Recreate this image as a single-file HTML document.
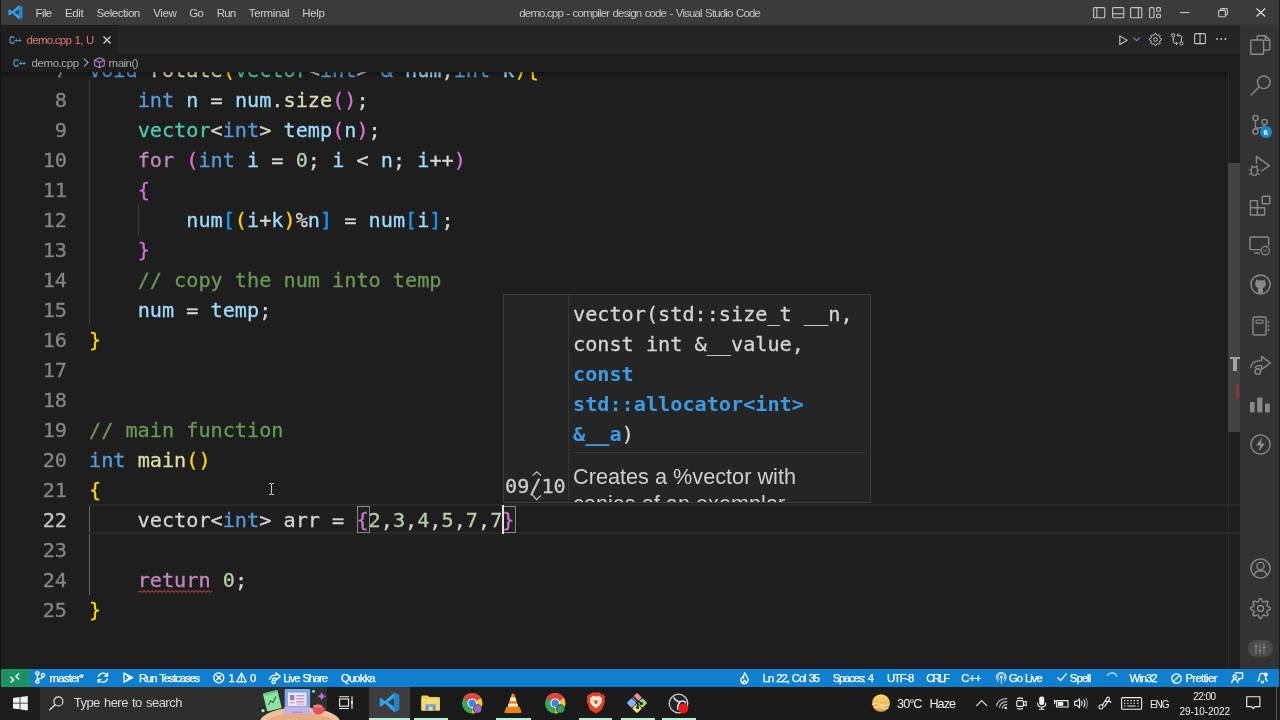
<!DOCTYPE html>
<html lang="en">
<head>
<meta charset="utf-8">
<title>demo.cpp - compiler design code - Visual Studio Code</title>
<style>
*{box-sizing:border-box;margin:0;padding:0}
html,body{width:1280px;height:720px;overflow:hidden;background:#1e1e1e;font-family:"Liberation Sans",sans-serif;}
#app{position:relative;width:1280px;height:720px;overflow:hidden;background:#1e1e1e;will-change:transform}
.abs{position:absolute}
.tx{position:absolute;white-space:pre;line-height:16px;height:16px}
#title{left:0;top:0;width:1280px;height:25px;background:#3b3b3b}
#tabs{left:0;top:25px;width:1240px;height:29px;background:#252526}
#tab1{left:0;top:0;width:118px;height:29px;background:#1e1e1e}
#crumbs{left:0;top:54px;width:1240px;height:18px;background:#1e1e1e}
#editor{left:0;top:72px;width:1240px;height:597px;background:#1e1e1e;overflow:hidden}
#edin{left:0;top:1px;width:1240px;height:596px}
.ln{position:absolute;left:0;width:67px;text-align:right;color:#858585;font-family:"DejaVu Sans Mono","Liberation Mono",monospace;font-size:20.2px;line-height:30px;height:30px;white-space:pre}
.ln.act{color:#c6c6c6}
.cl{position:absolute;left:89px;color:#d4d4d4;font-family:"DejaVu Sans Mono","Liberation Mono",monospace;font-size:20.2px;line-height:30px;height:30px;white-space:pre}
.cl,.ln,#pop .sig,#pop .ov{-webkit-text-stroke-width:0.3px}
#pop .sig b{-webkit-text-stroke-width:0}
.k{color:#569cd6}.t{color:#4ec9b0}.v{color:#9cdcfe}.f{color:#dcdcaa}.c{color:#c586c0}.n{color:#b5cea8}.cm{color:#6a9955}
.b1{color:#ffd700}.b2{color:#da70d6}.b3{color:#179fff}
#pop{left:503px;top:221px;width:368px;height:209px;background:#252526;border:1px solid #3e3e3e;overflow:hidden}
#pop .body{left:64px;top:0;width:302px;height:207px;border-left:1px solid #343434;overflow:hidden}
#pop .sig{position:absolute;left:4px;top:4px;width:292px;height:154px;border-bottom:1px solid #353535;font-family:"DejaVu Sans Mono","Liberation Mono",monospace;font-size:20.2px;line-height:30px;color:#d4d4d4;white-space:pre}
#pop .sig b{color:#3d9be4;font-weight:bold}
#pop .doc{position:absolute;left:4px;top:167.5px;font-size:21.7px;line-height:27.5px;color:#d0d0d0;white-space:pre}
#pop .ov{left:1px;top:176px;font-family:"DejaVu Sans Mono","Liberation Mono",monospace;font-size:20.2px;color:#cccccc;white-space:pre;line-height:30px}
#act{left:1240px;top:25px;width:40px;height:644px;background:#333333}
#status{left:0;top:669px;width:1280px;height:18px;background:#0e80cf}
#remote{left:0;top:669px;width:30px;height:18px;background:#1c9164}
#task{left:0;top:687px;width:1280px;height:33px;background:#1b1b1b}
#search{left:40px;top:687px;width:287px;height:33px;background:#2e2e2e}
svg{position:absolute;overflow:visible}
</style>
</head>
<body>
<div id="app">
  <div id="title" class="abs"></div>
  <div id="tabs" class="abs"><div id="tab1" class="abs"></div></div>
  <div id="crumbs" class="abs"></div>
  <div id="editor" class="abs">
  <div id="edin" class="abs">
    <div class="abs" style="left:89px;top:7px;width:1px;height:245px;background:#404040"></div>
    <div class="abs" style="left:138px;top:132px;width:1px;height:30px;background:#404040"></div>
    <div class="abs" style="left:89px;top:431px;width:1px;height:91px;background:#6a6a6a"></div>
    <div class="abs" style="left:89px;top:431px;width:1151px;height:30px;border-top:2px solid #292929;border-bottom:2px solid #292929"></div>
    <div class="abs" style="left:357px;top:433px;width:13px;height:27px;border:1px solid #888;background:rgba(0,100,0,0.1)"></div>
    <div class="abs" style="left:503px;top:433px;width:13px;height:27px;border:1px solid #888;background:rgba(0,100,0,0.1)"></div>
    <div class="abs" style="left:502px;top:432px;width:2px;height:29px;background:#e0e0e0"></div>
    <svg class="abs" style="left:138px;top:516px" width="74" height="5" viewBox="0 0 74 5"><path d="M0 3.5 L2 1.5 L4 3.5 L6 1.5 L8 3.5 L10 1.5 L12 3.5 L14 1.5 L16 3.5 L18 1.5 L20 3.5 L22 1.5 L24 3.5 L26 1.5 L28 3.5 L30 1.5 L32 3.5 L34 1.5 L36 3.5 L38 1.5 L40 3.5 L42 1.5 L44 3.5 L46 1.5 L48 3.5 L50 1.5 L52 3.5 L54 1.5 L56 3.5 L58 1.5 L60 3.5 L62 1.5 L64 3.5 L66 1.5 L68 3.5 L70 1.5 L72 3.5 L74 1.5" fill="none" stroke="#f14c4c" stroke-width="1"/></svg>
    <svg class="abs" style="left:267px;top:409px" width="9" height="14" viewBox="0 0 9 14"><path d="M2 1.5 H4 M5 1.5 H7 M4.5 1.5 V12.5 M2 12.5 H4 M5 12.5 H7" fill="none" stroke="#c8c8c8" stroke-width="1"/></svg>
    <div class="ln" style="top:-18px">7</div>
    <div class="cl" style="top:-18px"><span class="k">void</span> <span class="f">rotate</span><span class="b1">(</span><span class="t">vector</span>&lt;<span class="k">int</span>&gt; <span class="k">&amp;</span> <span class="v">num</span>,<span class="k">int</span> <span class="v">k</span><span class="b1">)</span><span class="b1">{</span></div>
    <div class="ln" style="top:12px">8</div>
    <div class="cl" style="top:12px">    <span class="k">int</span> <span class="v">n</span> = <span class="v">num</span>.<span class="f">size</span><span class="b2">()</span>;</div>
    <div class="ln" style="top:42px">9</div>
    <div class="cl" style="top:42px">    <span class="t">vector</span>&lt;<span class="k">int</span>&gt; <span class="v">temp</span><span class="b2">(</span><span class="v">n</span><span class="b2">)</span>;</div>
    <div class="ln" style="top:72px">10</div>
    <div class="cl" style="top:72px">    <span class="c">for</span> <span class="b2">(</span><span class="k">int</span> <span class="v">i</span> = <span class="n">0</span>; <span class="v">i</span> &lt; <span class="v">n</span>; <span class="v">i</span>++<span class="b2">)</span></div>
    <div class="ln" style="top:102px">11</div>
    <div class="cl" style="top:102px">    <span class="b2">{</span></div>
    <div class="ln" style="top:132px">12</div>
    <div class="cl" style="top:132px">        <span class="v">num</span><span class="b3">[</span><span class="b1">(</span><span class="v">i</span>+<span class="v">k</span><span class="b1">)</span>%<span class="v">n</span><span class="b3">]</span> = <span class="v">num</span><span class="b3">[</span><span class="v">i</span><span class="b3">]</span>;</div>
    <div class="ln" style="top:162px">13</div>
    <div class="cl" style="top:162px">    <span class="b2">}</span></div>
    <div class="ln" style="top:192px">14</div>
    <div class="cl" style="top:192px">    <span class="cm">// copy the num into temp</span></div>
    <div class="ln" style="top:222px">15</div>
    <div class="cl" style="top:222px">    <span class="v">num</span> = <span class="v">temp</span>;</div>
    <div class="ln" style="top:252px">16</div>
    <div class="cl" style="top:252px"><span class="b1">}</span></div>
    <div class="ln" style="top:282px">17</div>
    <div class="ln" style="top:312px">18</div>
    <div class="ln" style="top:342px">19</div>
    <div class="cl" style="top:342px"><span class="cm">// main function</span></div>
    <div class="ln" style="top:372px">20</div>
    <div class="cl" style="top:372px"><span class="k">int</span> <span class="f">main</span><span class="b1">()</span></div>
    <div class="ln" style="top:402px">21</div>
    <div class="cl" style="top:402px"><span class="b1">{</span></div>
    <div class="ln act" style="top:432px">22</div>
    <div class="cl" style="top:432px">    vector&lt;<span class="k">int</span>&gt; arr = <span class="b2 bm">{</span><span class="n">2</span>,<span class="n">3</span>,<span class="n">4</span>,<span class="n">5</span>,<span class="n">7</span>,<span class="n">7</span><span class="b2 bm">}</span></div>
    <div class="ln" style="top:462px">23</div>
    <div class="ln" style="top:492px">24</div>
    <div class="cl" style="top:492px">    <span class="c sq">return</span> <span class="n">0</span>;</div>
    <div class="ln" style="top:522px">25</div>
    <div class="cl" style="top:522px"><span class="b1">}</span></div>
    <div class="abs topshadow" style="left:0;top:-1px;width:1228px;height:5px;background:linear-gradient(rgba(0,0,0,0.4),rgba(0,0,0,0))"></div>
    <div id="pop" class="abs">
      <div class="abs" style="left:0;top:0;width:64px;height:207px;"></div>
      <div class="abs ov">09/10<svg class="abs" style="left:24px;top:-8px" width="16" height="40" viewBox="0 0 16 40"><path d="M3.6 12.6 L7.8 8.8 L12 12.6 M3.2 31.6 L7.6 36.6 L12 32.4" fill="none" stroke="#d0d0d0" stroke-width="1.1"/></svg></div>
      <div class="abs body">
        <div class="sig">vector(std::size_t __n,<br>const int &amp;__value,<br><b>const<br>std::allocator&lt;int&gt;<br>&amp;__a</b>)</div>
        <div class="doc">Creates a %vector with<br>copies of an exemplar</div>
      </div>
    </div>
  </div>
  </div>

  <div id="act" class="abs"></div>
  <div id="status" class="abs"></div>
  <div id="remote" class="abs"></div>
  <div id="task" class="abs"></div>
  <div id="search" class="abs"></div>
  <div class="abs" style="left:0;top:687px;width:40px;height:33px;background:#1d1d1d"></div>
  <svg style="left:12.6px;top:696px" width="14.8" height="14.4" viewBox="0 0 14.8 14.4" ><path d="M0 2 L6.6 1.1 V6.8 H0 Z M7.4 1 L14.8 0 V6.8 H7.4 Z M0 7.6 H6.6 V13.3 L0 12.4 Z M7.4 7.6 H14.8 V14.4 L7.4 13.4 Z" fill="#f2f2f2"/></svg>
  <svg style="left:49.4px;top:696.4px" width="15" height="14.4" viewBox="0 0 15 14.4" ><circle cx="9.4" cy="5.4" r="4.5" fill="none" stroke="#e0e0e0" stroke-width="1.2"/><path d="M6.2 8.8 L0.8 13.8" stroke="#e0e0e0" stroke-width="1.3" stroke-linecap="round"/></svg>
  <svg style="left:258px;top:687px" width="69" height="33" viewBox="258 687 69 33">
 <ellipse cx="300" cy="722" rx="40" ry="14.5" fill="#efc19d"/>
 <ellipse cx="300" cy="725" rx="36" ry="12" fill="#e6ad85"/>
 <circle cx="263" cy="710.7" r="1.6" fill="#a6ead2"/>
 <circle cx="313.5" cy="691.3" r="1.5" fill="#94e2a4"/>
 <g transform="rotate(-14 272 700)"><rect x="264.6" y="691.6" width="15" height="18.4" rx="1.2" fill="#8fe3a2"/><rect x="264.6" y="691.6" width="15" height="2.2" fill="#6cc487"/><path d="M267.4 704 L270.4 700.4 L272.4 702.6 L276.6 697.6" fill="none" stroke="#2f7d4a" stroke-width="1.3"/></g>
 <rect x="284.7" y="689" width="25.4" height="17.8" rx="1" fill="#79aee6"/>
 <rect x="288" y="692.6" width="18.4" height="13.4" fill="#eee6fa"/>
 <rect x="290" y="695" width="4.4" height="5.2" fill="#9a78c8"/>
 <rect x="290" y="702" width="4.4" height="1.4" fill="#b9a0dc"/>
 <rect x="296.4" y="695" width="8" height="1.5" fill="#b295d8"/>
 <rect x="296.4" y="698" width="8" height="1.5" fill="#b295d8"/>
 <rect x="296.4" y="701" width="8" height="1.5" fill="#e58a9a"/>
 <rect x="296.4" y="703.6" width="8" height="1.3" fill="#c9b4e6"/>
 <path d="M284.6 706.6 H310.2 L311.6 714 H283.2 Z" fill="#c3b2e4"/>
 <rect x="292" y="711.6" width="11" height="1.4" fill="#a794d0"/>
 <ellipse cx="318.4" cy="709.6" rx="5.6" ry="5" fill="#e2505c"/>
 <ellipse cx="317.6" cy="706.2" rx="4.6" ry="1.6" fill="#ee7c82"/>
 <path d="M323 707.4 Q326 708.6 323.4 711.6" fill="none" stroke="#c8404c" stroke-width="1.4"/>
 <path d="M321.7 692 L323 695 L326 696.2 L323 697.4 L321.7 700.4 L320.4 697.4 L317.4 696.2 L320.4 695 Z" fill="#c474da"/>
</svg>
  <svg style="left:339.4px;top:696.4px" width="14.6" height="13.2" viewBox="0 0 14.6 13.2" ><rect x="0.6" y="3" width="9" height="7.2" fill="none" stroke="#f0f0f0" stroke-width="1.1"/><path d="M0.2 0.7 H10 M0.2 12.5 H10 M13 0.2 V13" stroke="#f0f0f0" stroke-width="1.1"/><rect x="12" y="5.4" width="2" height="2.2" fill="#f0f0f0"/></svg>
  <div class="abs" style="left:369.4px;top:687px;width:40.2px;height:33px;background:#3e3c3c"></div>
  <div class="abs" style="left:369.4px;top:717.6px;width:40.2px;height:2.4px;background:#b6f0d4"></div>
  <div class="abs" style="left:414.2px;top:717.6px;width:33.8px;height:2.4px;background:#b6f0d4"></div>
  <div class="abs" style="left:496px;top:717.6px;width:34.8px;height:2.4px;background:#b6f0d4"></div>
  <div class="abs" style="left:579px;top:717.6px;width:33.4px;height:2.4px;background:#b6f0d4"></div>
  <div class="abs" style="left:620.6px;top:717.6px;width:34.2px;height:2.4px;background:#b6f0d4"></div>
  <div class="abs" style="left:662px;top:717.6px;width:34.0px;height:2.4px;background:#b6f0d4"></div>
  <svg style="left:379px;top:692.4px" width="21" height="20.6" viewBox="0 0 100 100" ><path d="M74 2 L98 13 V87 L74 98 L72 72 V28 Z" fill="#1f84c8"/><path d="M74 2 L28 45 L9 30 L2 34 V66 L9 70 L28 55 L74 98 V72 L42 50 L74 28 Z" fill="#2b9fe6"/><path d="M2 34 L9 30 L74 86 V98 L28 55 Z M2 66 L9 70 L74 14 V2 L28 45Z" fill="#3cb0f5" opacity="0.5"/></svg>
  <svg style="left:421px;top:694.6px" width="19.2" height="15.8" viewBox="0 0 19.2 15.8" ><path d="M0.4 1.2 Q0.4 0.4 1.2 0.4 H6.6 L8.4 2 H18 Q18.8 2 18.8 2.8 V15.4 H0.4 Z" fill="#f3c94e"/><rect x="0.4" y="3.6" width="18.4" height="11.8" fill="#f7da72"/><path d="M4.6 9.4 H14.6 V15.4 H4.6 Z" fill="#5b93d4"/><rect x="7.4" y="11.6" width="4.4" height="3.8" fill="#f7da72"/><rect x="4.6" y="9.4" width="10" height="1.4" fill="#7fb0e4"/></svg>
  <svg style="left:460.6px;top:692.0px" width="22.4" height="22.4" viewBox="-11.2 -11.2 22.4 22.4">
 <circle r="10.2" fill="#3aa757"/>
 <path d="M0 0 L-8.83 -5.10 A10.2 10.2 0 0 1 8.83 -5.10 Z" fill="#e4453a"/>
 <path d="M0 0 L8.83 -5.10 A10.2 10.2 0 0 1 0 10.2 Z" fill="#f8c634"/>
 <circle r="4.79" fill="#f4f4f4"/><circle r="3.67" fill="#4383ec"/>
 <circle cx="5.30" cy="5.71" r="4.28" fill="#9a63c9" stroke="#1b1b1b" stroke-width="0.6"/>
</svg>
  <svg style="left:504px;top:692.6px" width="18" height="20.4" viewBox="0 0 18 20.4" ><path d="M9 0.4 Q10 0.4 10.4 1.6 L14.6 14.4 H3.4 L7.6 1.6 Q8 0.4 9 0.4 Z" fill="#f08c18"/><path d="M6.7 4.6 H11.3 L12.4 8 H5.6 Z" fill="#f6f0e6"/><path d="M4.7 10.8 H13.3 L14.2 13.6 H3.8 Z" fill="#f6f0e6"/><path d="M2.4 14 H15.6 L17.6 19 Q17.6 20 16.6 20 H1.4 Q0.4 20 0.4 19 Z" fill="#ee8210"/></svg>
  <svg style="left:543.5px;top:692.0px" width="22.4" height="22.4" viewBox="-11.2 -11.2 22.4 22.4">
 <circle r="10.2" fill="#3aa757"/>
 <path d="M0 0 L-8.83 -5.10 A10.2 10.2 0 0 1 8.83 -5.10 Z" fill="#e4453a"/>
 <path d="M0 0 L8.83 -5.10 A10.2 10.2 0 0 1 0 10.2 Z" fill="#f8c634"/>
 <circle r="4.79" fill="#f4f4f4"/><circle r="3.67" fill="#4383ec"/>
 <circle cx="5.30" cy="5.71" r="4.28" fill="#2f9e57" stroke="#1b1b1b" stroke-width="0.6"/>
</svg>
  <svg style="left:586.2px;top:692.2px" width="19.8" height="21.6" viewBox="0 0 19.8 21.6" ><path d="M6 0.6 H13.8 L15.6 2.6 L17.6 2.4 L19.2 5 L18.4 7.2 L19 9.4 L16.4 16.6 Q15.8 18 14.6 18.8 L10.8 21 Q9.9 21.5 9 21 L5.2 18.8 Q4 18 3.4 16.6 L0.8 9.4 L1.4 7.2 L0.6 5 L2.2 2.4 L4.2 2.6 Z" fill="#e5401f"/><path d="M9.9 4.4 L13 3.8 L16 6.6 L15.4 8.6 L15.8 10 L13.6 13.4 L11.4 15 L9.9 16.6 L8.4 15 L6.2 13.4 L4 10 L4.4 8.6 L3.8 6.6 L6.8 3.8 Z" fill="#fbe9e2"/><path d="M9.9 8 L11.6 9 L11 11.4 L9.9 12.2 L8.8 11.4 L8.2 9 Z M6.2 7.4 L8 8 L7.2 8.8 Z M13.6 7.4 L11.8 8 L12.6 8.8 Z" fill="#e5401f"/></svg>
  <svg style="left:626px;top:692.2px" width="22" height="22" viewBox="-11 -11 22 22">
 <g transform="rotate(45)"><rect x="-7.3" y="-7.3" width="7" height="7" rx="1" fill="#f0909c"/><rect x="0.3" y="-7.3" width="7" height="7" rx="1" fill="#96d878"/><rect x="-7.3" y="0.3" width="7" height="7" rx="1" fill="#86b4f2"/><rect x="0.3" y="0.3" width="7" height="7" rx="1" fill="#f0e27a"/></g>
 <path d="M-3.6 -6.4 L0.6 -2 V4 M0.6 -2 L4 0.2" fill="none" stroke="#1a1a1a" stroke-width="1.4"/><circle cx="0.6" cy="4.4" r="1.5" fill="#1a1a1a"/><circle cx="4.4" cy="0.4" r="1.5" fill="#1a1a1a"/>
</svg>
  <svg style="left:668px;top:692.7px" width="21" height="21" viewBox="-10.5 -10.5 21 21">
 <circle r="9.3" fill="#22252a" stroke="#c9c9c9" stroke-width="1.3"/>
 <path d="M-4.4 -5.6 Q-2.6 -2 1.4 -1.6 M1.4 -1.6 Q5 -3.6 7 -1 M1.4 -1.6 Q-1.6 2 -0.4 6" fill="none" stroke="#e6e6e6" stroke-width="1.6" stroke-linecap="round"/>
 <circle cx="4.8" cy="5" r="5" fill="#f01414"/>
</svg>
  <svg style="left:871px;top:693px" width="20" height="20" viewBox="-10 -10 20 20">
 <defs><linearGradient id="sun" x1="0" y1="0" x2="0" y2="1"><stop offset="0" stop-color="#f7d77a"/><stop offset="1" stop-color="#e9a23a"/></linearGradient></defs>
 <circle r="8.8" fill="url(#sun)"/>
 <path d="M-9 1.6 Q-5 -0.6 -1 1.6 T8.6 1.6 M-7.4 4.8 Q-3.6 2.8 0.4 4.8 T7.6 4.4" fill="none" stroke="#f6e9c8" stroke-width="1.2" opacity="0.85"/>
</svg>
  <svg style="left:976px;top:700.2px" width="11.4" height="6.2" viewBox="0 0 11.4 6.2" ><path d="M0.6 5.6 L5.7 0.7 L10.8 5.6" fill="none" stroke="#f0f0f0" stroke-width="1.1" stroke-linecap="round" stroke-linejoin="round"/></svg>
  <svg style="left:996px;top:697.6px" width="11.6" height="11.6" viewBox="0 0 11.6 11.6" ><path d="M0.6 8 Q1.4 1 10.8 0.6 M3.6 9.4 Q4 4 10.8 3.6 M6.4 10.4 Q6.8 6.8 10.8 6.6" fill="none" stroke="#bdbdbd" stroke-width="1.1" stroke-linecap="round"/><circle cx="9.8" cy="10" r="1.3" fill="#f0f0f0"/></svg>
  <svg style="left:1016.4px;top:696.8px" width="11" height="13" viewBox="0 0 11 13" ><rect x="0.8" y="3.6" width="6.6" height="5.8" rx="1" fill="none" stroke="#f0f0f0" stroke-width="1.1" stroke-linecap="round" stroke-linejoin="round"/><path d="M7.4 5.6 L10.2 4.2 V8.8 L7.4 7.4 M1.6 1.6 Q4 0.2 6.6 1.6 M1.6 11.4 Q4 12.8 6.6 11.4" fill="none" stroke="#f0f0f0" stroke-width="1.1" stroke-linecap="round" stroke-linejoin="round"/></svg>
  <svg style="left:1036.8px;top:696.4px" width="9.4" height="13.8" viewBox="0 0 9.4 13.8" ><rect x="2.2" y="0.4" width="5" height="8.6" rx="2.2" fill="#f0f0f0"/><path d="M0.6 7 Q0.6 11 4.7 11 Q8.8 11 8.8 7 M4.7 11 V13.2 M2.4 13.3 H7" fill="none" stroke="#f0f0f0" stroke-width="1.1" stroke-linecap="round" stroke-linejoin="round"/></svg>
  <svg style="left:1053.6px;top:698.6px" width="14.6" height="9.6" viewBox="0 0 14.6 9.6" ><rect x="2.6" y="1.6" width="11.4" height="6.4" fill="none" stroke="#f0f0f0" stroke-width="1.1" stroke-linecap="round" stroke-linejoin="round"/><rect x="3.8" y="2.8" width="5.4" height="4" fill="#f0f0f0"/><path d="M0.6 1 V4.6 M0.6 2.4 H2.4" fill="none" stroke="#f0f0f0" stroke-width="1.1" stroke-linecap="round" stroke-linejoin="round"/></svg>
  <svg style="left:1074.4px;top:697px" width="13.8" height="12.6" viewBox="0 0 13.8 12.6" ><path d="M0.6 4.4 H2.8 L5.6 1.8 V10.8 L2.8 8.2 H0.6 Z" fill="none" stroke="#f0f0f0" stroke-width="1.1" stroke-linecap="round" stroke-linejoin="round"/><path d="M7.6 4.4 Q8.8 6.3 7.6 8.2 M9.8 2.8 Q12 6.3 9.8 9.8" fill="none" stroke="#f0f0f0" stroke-width="1.1" stroke-linecap="round" stroke-linejoin="round"/><path d="M12 1.2 Q15 6.3 12 11.4" fill="none" stroke="#9a9a9a" stroke-width="1" stroke-linecap="round"/></svg>
  <svg style="left:1097.6px;top:696.2px" width="14" height="14" viewBox="0 0 14 14" ><path d="M3.4 13 Q0.6 13 1 10.4 Q1.6 8.4 3.8 8.8 Q5.4 9.4 5 11.2 Q4.6 13 3.4 13 Z M4.6 9 L8.8 2 Q9.8 0.6 11 1.4 Q12 2.2 11.2 3.6 L6.6 10.4 M8 5.4 Q11.6 4.6 13 6.4" fill="none" stroke="#f0f0f0" stroke-width="1.1" stroke-linecap="round" stroke-linejoin="round"/></svg>
  <svg style="left:1120.8px;top:697.4px" width="21.2" height="12.8" viewBox="0 0 21.2 12.8" ><rect x="0.6" y="0.6" width="20" height="11.6" rx="1" fill="none" stroke="#f0f0f0" stroke-width="1.1" stroke-linecap="round" stroke-linejoin="round"/><path d="M3 3.6 H4.4 M6.2 3.6 H7.6 M9.4 3.6 H10.8 M12.6 3.6 H14 M15.8 3.6 H17.6 M3 6.2 H4.4 M6.2 6.2 H7.6 M9.4 6.2 H10.8 M12.6 6.2 H14 M15.8 6.2 H17.6 M3 9 H4.4 M6.4 9 H14.6 M16.4 9 H17.8" stroke="#f0f0f0" stroke-width="1.1" fill="none"/></svg>
  <svg style="left:1245.6px;top:696.2px" width="14.6" height="14" viewBox="0 0 14.6 14" ><path d="M0.7 0.7 H13.9 V10.6 H9 L7.3 12.6 L5.6 10.6 H0.7 Z" fill="none" stroke="#f0f0f0" stroke-width="1.1" stroke-linecap="round" stroke-linejoin="round"/></svg>
  <div class="abs" style="left:1276px;top:687px;width:1px;height:33px;background:#5a5a5a"></div>
  <svg style="left:7.6px;top:5.4px" width="15" height="14.6" viewBox="0 0 100 100" ><path d="M74 2 L98 13 V87 L74 98 L72 72 V28 Z" fill="#1f8ad2"/><path d="M74 2 L28 45 L9 30 L2 34 V66 L9 70 L28 55 L74 98 V72 L42 50 L74 28 Z" fill="#2ea3ee"/><path d="M2 34 L9 30 L74 86 V98 L28 55 Z M2 66 L9 70 L74 14 V2 L28 45Z" fill="#3cb0f5" opacity="0.55"/></svg>
  <span class="tx" style="left:8.6px;top:32px;font-size:10.6px;font-weight:bold;color:#4d9bc8"><span style="display:inline-block;transform:scaleX(0.78);transform-origin:0 50%;margin-right:-2px">C</span><span style="font-size:7px;vertical-align:0.9px;letter-spacing:-0.7px">++</span></span>
  <svg style="left:102.5px;top:36px" width="8" height="8" viewBox="0 0 8 8" ><path d="M0.5 0.5 L7.5 7.5 M7.5 0.5 L0.5 7.5" stroke="#d8d8d8" stroke-width="1.2" fill="none"/></svg>
  <span class="tx" style="left:13px;top:55px;font-size:10.6px;font-weight:bold;color:#4d9bc8"><span style="display:inline-block;transform:scaleX(0.78);transform-origin:0 50%;margin-right:-2px">C</span><span style="font-size:7px;vertical-align:0.9px;letter-spacing:-0.7px">++</span></span>
  <svg style="left:83px;top:58.4px" width="6" height="9" viewBox="0 0 6 9" ><path d="M1 0.5 L5 4.5 L1 8.5" stroke="#9a9a9a" stroke-width="1.1" fill="none"/></svg>
  <svg style="left:94px;top:56.7px" width="11" height="11.5" viewBox="0 0 11 11.5" ><path d="M5.5 0.7 L10.3 3 V8.4 L5.5 10.8 L0.7 8.4 V3 Z M0.7 3 L5.5 5.4 L10.3 3 M5.5 5.4 V10.8" stroke="#b180d7" stroke-width="1.1" fill="none" stroke-linejoin="round"/></svg>
  <svg style="left:1093px;top:7px" width="12.4" height="11.4" viewBox="0 0 12.4 11.4" ><rect x="0.6" y="0.6" width="11.2" height="10.2" rx="1" fill="none" stroke="#c5c5c5" stroke-width="1.1"/><path d="M3.8 0.6 V10.8" stroke="#c5c5c5" stroke-width="1.1"/></svg>
  <svg style="left:1111.5px;top:7px" width="12.4" height="11.4" viewBox="0 0 12.4 11.4" ><rect x="0.6" y="0.6" width="11.2" height="10.2" rx="1" fill="none" stroke="#c5c5c5" stroke-width="1.1"/><path d="M0.6 6.8 H11.8" stroke="#c5c5c5" stroke-width="1.1"/></svg>
  <svg style="left:1129.8px;top:7px" width="12.4" height="11.4" viewBox="0 0 12.4 11.4" ><rect x="0.6" y="0.6" width="11.2" height="10.2" rx="1" fill="none" stroke="#c5c5c5" stroke-width="1.1"/><path d="M8.4 0.6 V10.8" stroke="#c5c5c5" stroke-width="1.1"/></svg>
  <svg style="left:1148.6px;top:7px" width="12.4" height="11.4" viewBox="0 0 12.4 11.4" ><rect x="0.6" y="0.6" width="4.4" height="10.2" rx="1" fill="none" stroke="#c5c5c5" stroke-width="1.1"/><rect x="7.6" y="0.6" width="3.8" height="3.6" rx="0.8" fill="none" stroke="#c5c5c5" stroke-width="1.1"/><rect x="7.6" y="7.2" width="3.8" height="3.6" rx="0.8" fill="none" stroke="#c5c5c5" stroke-width="1.1"/></svg>
  <svg style="left:1180px;top:12.3px" width="9.4" height="1.2" viewBox="0 0 9.4 1.2" ><rect width="9.4" height="1.1" fill="#c5c5c5"/></svg>
  <svg style="left:1218px;top:8.4px" width="10" height="9.4" viewBox="0 0 10 9.4" ><rect x="0.6" y="2.4" width="6.8" height="6.4" rx="1" fill="none" stroke="#c5c5c5" stroke-width="1.1"/><path d="M2.6 2.2 V1.6 Q2.6 0.6 3.6 0.6 H8.4 Q9.4 0.6 9.4 1.6 V6 Q9.4 7 8.4 7 H7.6" fill="none" stroke="#c5c5c5" stroke-width="1.1"/></svg>
  <svg style="left:1256px;top:8.4px" width="9.6" height="9" viewBox="0 0 9.6 9" ><path d="M0.5 0.5 L9.1 8.5 M9.1 0.5 L0.5 8.5" stroke="#e0e0e0" stroke-width="1.2" fill="none"/></svg>
  <svg style="left:1119px;top:34.6px" width="9" height="10.4" viewBox="0 0 9 10.4" ><path d="M0.8 0.9 L8.2 5.2 L0.8 9.5 Z" fill="none" stroke="#c5c5c5" stroke-width="1.1" stroke-linejoin="round"/></svg>
  <svg style="left:1133px;top:37.4px" width="7.4" height="4.4" viewBox="0 0 7.4 4.4" ><path d="M0.5 0.5 L3.7 3.7 L6.9 0.5" fill="none" stroke="#7b83a8" stroke-width="1.1"/></svg>
  <svg style="left:1149.3px;top:32.5px" width="13" height="13" viewBox="0 0 13 13" ><path d="M12.47 5.91 L12.47 7.09 L10.90 7.84 L10.56 8.67 L11.14 10.31 L10.31 11.14 L8.67 10.56 L7.84 10.90 L7.09 12.47 L5.91 12.47 L5.16 10.90 L4.33 10.56 L2.69 11.14 L1.86 10.31 L2.44 8.67 L2.10 7.84 L0.53 7.09 L0.53 5.91 L2.10 5.16 L2.44 4.33 L1.86 2.69 L2.69 1.86 L4.33 2.44 L5.16 2.10 L5.91 0.53 L7.09 0.53 L7.84 2.10 L8.67 2.44 L10.31 1.86 L11.14 2.69 L10.56 4.33 L10.90 5.16 Z" fill="none" stroke="#c5c5c5" stroke-width="1" stroke-linejoin="round"/><circle cx="6.5" cy="6.5" r="1.9" fill="none" stroke="#c5c5c5" stroke-width="1"/></svg>
  <svg style="left:1171.2px;top:33px" width="12.6" height="12.6" viewBox="0 0 12.6 12.6" ><circle cx="2.2" cy="2.2" r="1.6" fill="none" stroke="#c5c5c5" stroke-width="1"/><circle cx="10.4" cy="10.4" r="1.6" fill="none" stroke="#c5c5c5" stroke-width="1"/><path d="M2.2 3.8 V8.4 Q2.2 10.4 4.2 10.4 H6.4 M5 8.8 L6.6 10.4 L5 12 M10.4 8.8 V4.2 Q10.4 2.2 8.4 2.2 H6.2 M7.6 0.6 L6 2.2 L7.6 3.8" fill="none" stroke="#c5c5c5" stroke-width="1"/></svg>
  <svg style="left:1193.6px;top:33.2px" width="12" height="11.2" viewBox="0 0 12 11.2" ><rect x="0.6" y="0.6" width="10.8" height="10" rx="1" fill="none" stroke="#c5c5c5" stroke-width="1.1"/><path d="M6 0.6 V10.6" stroke="#c5c5c5" stroke-width="1.1"/></svg>
  <svg style="left:1216px;top:38px" width="10.4" height="2" viewBox="0 0 10.4 2" ><circle cx="1" cy="1" r="0.95" fill="#c5c5c5"/><circle cx="5.2" cy="1" r="0.95" fill="#c5c5c5"/><circle cx="9.4" cy="1" r="0.95" fill="#c5c5c5"/></svg><svg style="left:1250px;top:35px" width="21" height="20" viewBox="0 0 21 20" ><path d="M7.2 4.6 V1.8 Q7.2 0.8 8.2 0.8 H15.4 L19.8 5.2 V14 Q19.8 15 18.8 15 H14.2 M15.2 0.9 V5.4 H19.7" fill="none" stroke="#8a8a8a" stroke-width="1.4" stroke-linejoin="round" stroke-linecap="round"/><path d="M1.8 5 H12.6 Q13.6 5 13.6 6 V18.2 Q13.6 19.2 12.6 19.2 H1.8 Q0.8 19.2 0.8 18.2 V6 Q0.8 5 1.8 5 Z" fill="none" stroke="#8a8a8a" stroke-width="1.4" stroke-linejoin="round" stroke-linecap="round"/></svg>
  <svg style="left:1250px;top:74px" width="22" height="22" viewBox="0 0 22 22" ><circle cx="13.8" cy="8.3" r="6.3" fill="none" stroke="#8a8a8a" stroke-width="1.4" stroke-linejoin="round" stroke-linecap="round"/><path d="M9.2 12.8 L1.2 21" fill="none" stroke="#8a8a8a" stroke-width="1.4" stroke-linejoin="round" stroke-linecap="round"/></svg>
  <svg style="left:1250px;top:113px" width="22" height="23" viewBox="0 0 22 23" ><circle cx="5.5" cy="5" r="2.6" fill="none" stroke="#8a8a8a" stroke-width="1.4" stroke-linejoin="round" stroke-linecap="round"/><circle cx="14.6" cy="9" r="2.6" fill="none" stroke="#8a8a8a" stroke-width="1.4" stroke-linejoin="round" stroke-linecap="round"/><circle cx="5.5" cy="18.5" r="2.6" fill="none" stroke="#8a8a8a" stroke-width="1.4" stroke-linejoin="round" stroke-linecap="round"/><path d="M5.5 7.6 V15.9 M14.6 11.6 Q14.2 14.6 10 14.8 Q6 15 5.6 15.9" fill="none" stroke="#8a8a8a" stroke-width="1.4" stroke-linejoin="round" stroke-linecap="round"/></svg>
  <div class="abs" style="left:1260px;top:126.4px;width:12px;height:12px;border-radius:6px;background:#1b86c9"></div>
  <span class="tx" style="left:1263.6px;top:124.6px;font-size:8px;font-weight:bold;color:#fff">6</span>
  <svg style="left:1248px;top:155px" width="23" height="22" viewBox="0 0 23 22" ><path d="M8.4 8 V1.4 L21.4 10.6 L13.6 16" fill="none" stroke="#8a8a8a" stroke-width="1.4" stroke-linejoin="round" stroke-linecap="round"/><path d="M3.4 14.6 Q3.4 11.8 6.4 11.8 Q9.4 11.8 9.4 14.6 V17 Q9.4 20.4 6.4 20.4 Q3.4 20.4 3.4 17 Z M4.6 12 L3.4 10.6 M8.2 12 L9.4 10.6 M3.4 15 H1 M3.4 18 L1.4 19.6 M9.4 15 H11.8 M9.4 18 L11.4 19.6" fill="none" stroke="#8a8a8a" stroke-width="1.2" stroke-linecap="round"/></svg>
  <svg style="left:1249px;top:194.6px" width="23" height="21.4" viewBox="0 0 23 21.4" ><path d="M1.4 5.6 H8.4 V12.8 H15.6 V20 H1.4 Z M1.4 12.8 H8.4 V20" fill="none" stroke="#8a8a8a" stroke-width="1.4" stroke-linejoin="round" stroke-linecap="round"/><rect x="13.2" y="1.2" width="7.6" height="7.6" rx="0.6" fill="none" stroke="#8a8a8a" stroke-width="1.4" stroke-linejoin="round" stroke-linecap="round"/></svg>
  <svg style="left:1249px;top:236px" width="23" height="20" viewBox="0 0 23 20" ><path d="M11 13.6 H2 Q1 13.6 1 12.6 V2 Q1 1 2 1 H18.6 Q19.6 1 19.6 2 V9.4 M5.6 17 H10.4" fill="none" stroke="#8a8a8a" stroke-width="1.4" stroke-linejoin="round" stroke-linecap="round"/><circle cx="16.2" cy="14.6" r="4.2" fill="none" stroke="#8a8a8a" stroke-width="1.2"/><path d="M14.6 13.4 L15.8 14.6 L14.6 15.8 M17.8 13.4 L16.6 14.6 L17.8 15.8" fill="none" stroke="#8a8a8a" stroke-width="0.9"/></svg>
  <svg style="left:1249.5px;top:273.9px" width="21" height="21" viewBox="0 0 21 21" ><circle cx="10.5" cy="10.5" r="9.6" fill="none" stroke="#8a8a8a" stroke-width="1.5"/><path d="M6.2 5.2 L8 6.6 Q10.5 6 13 6.6 L14.8 5.2 L15.2 7.8 Q16.2 9.2 15.8 11 Q15.2 13.6 12.6 14 Q13.2 15 13 17.6 L12.9 19.4 H8.1 L8 17.6 Q7.8 15 8.4 14 Q5.8 13.6 5.2 11 Q4.8 9.2 5.8 7.8 Z" fill="#8a8a8a"/></svg>
  <svg style="left:1252px;top:316px" width="18" height="20" viewBox="0 0 18 20" ><rect x="1" y="1" width="13" height="18" rx="1.2" fill="none" stroke="#8a8a8a" stroke-width="1.4" stroke-linejoin="round" stroke-linecap="round"/><rect x="4" y="4" width="7" height="3.2" rx="1" fill="none" stroke="#8a8a8a" stroke-width="1.2"/><path d="M16.4 5.5 V6.5 M16.4 9.5 V10.5 M16.4 13.5 V14.5" stroke="#8a8a8a" stroke-width="1.5" stroke-linecap="round"/></svg>
  <svg style="left:1249px;top:355px" width="23" height="21" viewBox="0 0 23 21" ><path d="M1.6 12.4 Q2.4 5.6 12.6 5.6 V1.4 L21.4 8 L12.6 14.4 V10.4 Q8.4 10.2 6 12.4" fill="none" stroke="#8a8a8a" stroke-width="1.4" stroke-linejoin="round" stroke-linecap="round"/><circle cx="8.8" cy="16.6" r="2.8" fill="none" stroke="#8a8a8a" stroke-width="1.4" stroke-linejoin="round" stroke-linecap="round"/></svg>
  <svg style="left:1249px;top:396px" width="23" height="18" viewBox="0 0 23 18" ><rect x="1" y="6" width="4.6" height="10.6" rx="0.8" fill="#8a8a8a"/><rect x="8.2" y="1.4" width="5.2" height="15.2" rx="0.8" fill="#8a8a8a"/><rect x="16" y="7.6" width="4.8" height="9" rx="0.8" fill="#8a8a8a"/></svg>
  <svg style="left:1249.5px;top:433.9px" width="21" height="21" viewBox="0 0 21 21" ><circle cx="10.5" cy="10.5" r="9.6" fill="none" stroke="#8a8a8a" stroke-width="1.4"/><path d="M12 3.6 L6 11.4 H10 L8.8 17.4 L15 9.4 H11 Z" fill="#8a8a8a"/></svg>
  <svg style="left:1249.5px;top:558.4px" width="21" height="21" viewBox="0 0 21 21" ><circle cx="10.5" cy="10.5" r="9.6" fill="none" stroke="#8a8a8a" stroke-width="1.4"/><circle cx="10.5" cy="8" r="3.6" fill="none" stroke="#8a8a8a" stroke-width="1.4"/><path d="M4 17.4 Q5 12.8 10.5 12.8 Q16 12.8 17 17.4" fill="none" stroke="#8a8a8a" stroke-width="1.4"/></svg>
  <svg style="left:1249.5px;top:597.7px" width="21" height="21" viewBox="0 0 21 21" ><path d="M20.25 9.54 L20.25 11.46 L17.39 12.59 L16.85 13.89 L18.08 16.72 L16.72 18.08 L13.89 16.85 L12.59 17.39 L11.46 20.25 L9.54 20.25 L8.41 17.39 L7.11 16.85 L4.28 18.08 L2.92 16.72 L4.15 13.89 L3.61 12.59 L0.75 11.46 L0.75 9.54 L3.61 8.41 L4.15 7.11 L2.92 4.28 L4.28 2.92 L7.11 4.15 L8.41 3.61 L9.54 0.75 L11.46 0.75 L12.59 3.61 L13.89 4.15 L16.72 2.92 L18.08 4.28 L16.85 7.11 L17.39 8.41 Z" fill="none" stroke="#8a8a8a" stroke-width="1.4" stroke-linejoin="round" stroke-linecap="round"/><circle cx="10.5" cy="10.5" r="3" fill="none" stroke="#8a8a8a" stroke-width="1.4" stroke-linejoin="round" stroke-linecap="round"/></svg>
  <div class="abs" style="left:1247.5px;top:640px;width:25px;height:16.6px;border-radius:8.3px;background:#4b4b4b"></div>
  <svg style="left:1254px;top:642.6px" width="12" height="11.4" viewBox="0 0 12 11.4" ><path d="M2 0.4 V11 M6 0.4 V11 M10 0.4 V11 M0.4 3.4 H3.6 M4.4 7.6 H7.6 M8.4 4.4 H11.6" stroke="#8c8c8c" stroke-width="1" fill="none"/></svg>
  <div class="abs" style="left:1228px;top:73px;width:1px;height:596px;background:#2c2c2c"></div>
  <div class="abs" style="left:1228px;top:163px;width:12px;height:269px;background:#424242"></div>
  <div class="abs" style="left:1229.5px;top:356.6px;width:10.5px;height:2.8px;background:#a4a4a4"></div>
  <div class="abs" style="left:1232.8px;top:359px;width:4.4px;height:12px;background:#a4a4a4"></div>
  <div class="abs" style="left:1236.4px;top:384px;width:3px;height:15px;background:#8c3434"></div>
  <div class="abs" style="left:0;top:0;width:1px;height:687px;background:#161616"></div>
  <div class="abs" style="left:1279px;top:0;width:1px;height:687px;background:#1a1a1a"></div><svg style="left:9.6px;top:672.6px" width="9.6" height="10" viewBox="0 0 9.6 10" ><path d="M0.8 5.2 L3.8 8 L0.8 10.2" transform="translate(0,-1)" fill="none" stroke="#ffffff" stroke-width="1.3" stroke-linecap="round" stroke-linejoin="round"/><path d="M8.8 0.8 L5.8 3.4 L8.8 6" fill="none" stroke="#ffffff" stroke-width="1.3" stroke-linecap="round" stroke-linejoin="round"/></svg>
  <svg style="left:35.4px;top:671px" width="10.4" height="12.8" viewBox="0 0 10.4 12.8" ><circle cx="2.4" cy="2.2" r="1.6" fill="none" stroke="#ffffff" stroke-width="1.3" stroke-linecap="round" stroke-linejoin="round"/><circle cx="8" cy="4" r="1.6" fill="none" stroke="#ffffff" stroke-width="1.3" stroke-linecap="round" stroke-linejoin="round"/><circle cx="2.4" cy="10.6" r="1.6" fill="none" stroke="#ffffff" stroke-width="1.3" stroke-linecap="round" stroke-linejoin="round"/><path d="M2.4 3.8 V9 M8 5.6 Q7.8 7.4 5 7.6 Q2.6 7.8 2.4 9" fill="none" stroke="#ffffff" stroke-width="1.3" stroke-linecap="round" stroke-linejoin="round"/></svg>
  <svg style="left:97px;top:672.2px" width="11.8" height="11.6" viewBox="0 0 11.8 11.6" ><path d="M1.4 4.6 Q3 1.2 6.2 1.2 Q9 1.2 10.4 3.8 M10.6 1.2 V4 H7.8 M10.4 7 Q8.8 10.4 5.6 10.4 Q2.8 10.4 1.4 7.8 M1.2 10.4 V7.6 H4" fill="none" stroke="#ffffff" stroke-width="1.3" stroke-linecap="round" stroke-linejoin="round"/></svg>
  <svg style="left:122.5px;top:672.4px" width="10.6" height="11.2" viewBox="0 0 10.6 11.2" ><path d="M1 1 L9.6 5.6 L1 10.2 Z M3.6 3.6 L6.8 5.6 L3.6 7.6" fill="none" stroke="#ffffff" stroke-width="1.3" stroke-linejoin="round"/></svg>
  <svg style="left:213.2px;top:672.2px" width="11.6" height="11.6" viewBox="0 0 11.6 11.6" ><circle cx="5.8" cy="5.8" r="5" fill="none" stroke="#ffffff" stroke-width="1.3" stroke-linecap="round" stroke-linejoin="round"/><path d="M3.8 3.8 L7.8 7.8 M7.8 3.8 L3.8 7.8" fill="none" stroke="#ffffff" stroke-width="1.3" stroke-linecap="round" stroke-linejoin="round"/></svg>
  <svg style="left:236.4px;top:672.4px" width="11" height="10.8" viewBox="0 0 11 10.8" ><path d="M5.5 1 L10.2 9.8 H0.8 Z M5.5 4.2 V7 M5.5 8.2 V8.4" fill="none" stroke="#ffffff" stroke-width="1.3" stroke-linecap="round" stroke-linejoin="round"/></svg>
  <svg style="left:269px;top:671.6px" width="12" height="12.4" viewBox="0 0 12 12.4" ><path d="M0.8 7.4 Q1.2 3.2 7 3.2 V0.8 L11.2 4.4 L7 8 V5.8 Q4.6 5.8 3.4 7" fill="none" stroke="#ffffff" stroke-width="1.3" stroke-linecap="round" stroke-linejoin="round"/><circle cx="4.6" cy="9.8" r="1.7" fill="none" stroke="#ffffff" stroke-width="1.3" stroke-linecap="round" stroke-linejoin="round"/></svg>
  <svg style="left:739.5px;top:671.6px" width="9" height="12.4" viewBox="0 0 9 12.4" ><path d="M4.6 0.8 Q5.4 3 7 4.8 Q8.6 7 7.8 9 Q6.8 11.6 4.4 11.6 Q1.6 11.6 1 9 Q0.6 6.6 2.6 4.6 Q2.6 6 3.6 6.4 Q3.2 3.4 4.6 0.8 Z M3.2 11.2 Q3 9.4 4.5 8.4 Q6 9.4 5.8 11.2" fill="none" stroke="#ffffff" stroke-width="1.3" stroke-linecap="round" stroke-linejoin="round"/></svg>
  <svg style="left:995.6px;top:672px" width="10.6" height="12" viewBox="0 0 10.6 12" ><circle cx="5.3" cy="5" r="1.2" fill="#ffffff"/><path d="M5.3 6.4 V11.4 M3 7.4 Q1.9 6.4 1.9 5 Q1.9 1.8 5.3 1.8 Q8.7 1.8 8.7 5 Q8.7 6.4 7.6 7.4 M2 9.2 Q0.5 7.6 0.5 5 Q0.5 0.5 5.3 0.5 Q10.1 0.5 10.1 5 Q10.1 7.6 8.6 9.2" fill="none" stroke="#ffffff" stroke-width="0.9" stroke-linecap="round"/></svg>
  <svg style="left:1056.6px;top:673.4px" width="10" height="8.6" viewBox="0 0 10 8.6" ><path d="M0.8 4.8 L3.6 7.6 L9.2 0.8" fill="none" stroke="#ffffff" stroke-width="1.3" stroke-linecap="round" stroke-linejoin="round"/></svg>
  <svg style="left:1105.5px;top:671.6px" width="12" height="12" viewBox="0 0 12 12" ><path d="M1.4 3.4 Q3 0.9 6 0.9 Q9.6 0.9 10.8 4.6" fill="none" stroke="#cfe6f7" stroke-width="1.1" stroke-linecap="round"/></svg>
  <svg style="left:1171.4px;top:672.6px" width="11" height="11" viewBox="0 0 11 11" ><circle cx="5.5" cy="5.5" r="4.7" fill="none" stroke="#ffffff" stroke-width="1.3" stroke-linecap="round" stroke-linejoin="round"/><path d="M2.4 8.6 L8.6 2.4" fill="none" stroke="#ffffff" stroke-width="1.3" stroke-linecap="round" stroke-linejoin="round"/></svg>
  <svg style="left:1231px;top:672.4px" width="12.4" height="11.4" viewBox="0 0 12.4 11.4" ><path d="M4.2 0.8 H11.6 V6.4 H9.6 L8 8 V6.4 H7.4" fill="none" stroke="#ffffff" stroke-width="1.3" stroke-linecap="round" stroke-linejoin="round"/><circle cx="3.8" cy="4.6" r="1.7" fill="none" stroke="#ffffff" stroke-width="1.3" stroke-linecap="round" stroke-linejoin="round"/><path d="M0.8 10.6 Q0.8 7.4 3.8 7.4 Q6.8 7.4 6.8 10.6" fill="none" stroke="#ffffff" stroke-width="1.3" stroke-linecap="round" stroke-linejoin="round"/></svg>
  <svg style="left:1257px;top:672px" width="11.4" height="12" viewBox="0 0 11.4 12" ><path d="M1 9 Q2.4 8 2.4 5 Q2.4 1.4 5.4 1.4 Q6.2 1.4 6.8 1.7 M8.6 5.4 Q8.6 8 10 9 Z M4.4 9.2 Q4.4 10.8 5.5 10.8 Q6.6 10.8 6.6 9.2" fill="none" stroke="#ffffff" stroke-width="1.3" stroke-linecap="round" stroke-linejoin="round"/><circle cx="8.8" cy="2.6" r="2.1" fill="#ffffff"/></svg>
  <span class="tx" style="left:35.6px;top:4.6px;font-size:11.5px;letter-spacing:-0.633px;word-spacing:0px;color:#cccccc;font-weight:400">File</span>
  <span class="tx" style="left:65.0px;top:4.6px;font-size:11.5px;letter-spacing:-0.382px;word-spacing:0px;color:#cccccc;font-weight:400">Edit</span>
  <span class="tx" style="left:96.6px;top:4.6px;font-size:11.5px;letter-spacing:-0.457px;word-spacing:0px;color:#cccccc;font-weight:400">Selection</span>
  <span class="tx" style="left:153.2px;top:4.6px;font-size:11.5px;letter-spacing:-0.330px;word-spacing:0px;color:#cccccc;font-weight:400">View</span>
  <span class="tx" style="left:189.3px;top:4.6px;font-size:11.5px;letter-spacing:-0.772px;word-spacing:0px;color:#cccccc;font-weight:400">Go</span>
  <span class="tx" style="left:216.7px;top:4.6px;font-size:11.5px;letter-spacing:-0.803px;word-spacing:0px;color:#cccccc;font-weight:400">Run</span>
  <span class="tx" style="left:248.8px;top:4.6px;font-size:11.5px;letter-spacing:-0.396px;word-spacing:0px;color:#cccccc;font-weight:400">Terminal</span>
  <span class="tx" style="left:302.2px;top:4.6px;font-size:11.5px;letter-spacing:-0.314px;word-spacing:0px;color:#cccccc;font-weight:400">Help</span>
  <span class="tx" style="left:519.3px;top:4.6px;font-size:11.5px;letter-spacing:-0.856px;word-spacing:1.0px;color:#c4c4c4;font-weight:400">demo.cpp - compiler design code - Visual Studio Code</span>
  <span class="tx" style="left:26.6px;top:32.0px;font-size:11.5px;letter-spacing:-0.754px;word-spacing:1.0px;color:#e0786c;font-weight:400">demo.cpp 1, U</span>
  <span class="tx" style="left:31.6px;top:54.9px;font-size:11.5px;letter-spacing:-0.439px;word-spacing:0px;color:#a8a8a8;font-weight:400">demo.cpp</span>
  <span class="tx" style="left:108.6px;top:54.9px;font-size:11.5px;letter-spacing:-0.516px;word-spacing:0px;color:#a8a8a8;font-weight:400">main()</span>
  <span class="tx" style="left:49.6px;top:670.0px;font-size:11.3px;letter-spacing:-0.760px;word-spacing:0px;color:#ffffff;font-weight:400;-webkit-text-stroke:0.25px #ffffff">master*</span>
  <span class="tx" style="left:139.1px;top:670.0px;font-size:11.3px;letter-spacing:-1.145px;word-spacing:1.0px;color:#ffffff;font-weight:400;-webkit-text-stroke:0.25px #ffffff">Run Testcases</span>
  <span class="tx" style="left:228.5px;top:670.0px;font-size:11.3px;letter-spacing:-2.897px;word-spacing:0px;color:#ffffff;font-weight:400;-webkit-text-stroke:0.25px #ffffff">1</span>
  <span class="tx" style="left:249.9px;top:670.0px;font-size:11.3px;letter-spacing:-1.097px;word-spacing:0px;color:#ffffff;font-weight:400;-webkit-text-stroke:0.25px #ffffff">0</span>
  <span class="tx" style="left:283.2px;top:670.0px;font-size:11.3px;letter-spacing:-1.132px;word-spacing:1.0px;color:#ffffff;font-weight:400;-webkit-text-stroke:0.25px #ffffff">Live Share</span>
  <span class="tx" style="left:341.0px;top:670.0px;font-size:11.3px;letter-spacing:-0.890px;word-spacing:0px;color:#ffffff;font-weight:400;-webkit-text-stroke:0.25px #ffffff">Quokka</span>
  <span class="tx" style="left:762.7px;top:670.0px;font-size:11.3px;letter-spacing:-1.062px;word-spacing:1.0px;color:#ffffff;font-weight:400;-webkit-text-stroke:0.25px #ffffff">Ln 22, Col 35</span>
  <span class="tx" style="left:832.7px;top:670.0px;font-size:11.3px;letter-spacing:-1.250px;word-spacing:1.0px;color:#ffffff;font-weight:400;-webkit-text-stroke:0.25px #ffffff">Spaces: 4</span>
  <span class="tx" style="left:887.0px;top:670.0px;font-size:11.3px;letter-spacing:-1.163px;word-spacing:0px;color:#ffffff;font-weight:400;-webkit-text-stroke:0.25px #ffffff">UTF-8</span>
  <span class="tx" style="left:926.3px;top:670.0px;font-size:11.3px;letter-spacing:-1.900px;word-spacing:0px;color:#ffffff;font-weight:400;-webkit-text-stroke:0.25px #ffffff">CRLF</span>
  <span class="tx" style="left:961.3px;top:670.0px;font-size:11.3px;letter-spacing:-0.553px;word-spacing:0px;color:#ffffff;font-weight:400;-webkit-text-stroke:0.25px #ffffff">C++</span>
  <span class="tx" style="left:1008.9px;top:670.0px;font-size:11.3px;letter-spacing:-1.020px;word-spacing:1.0px;color:#ffffff;font-weight:400;-webkit-text-stroke:0.25px #ffffff">Go Live</span>
  <span class="tx" style="left:1069.8px;top:670.0px;font-size:11.3px;letter-spacing:-0.945px;word-spacing:0px;color:#ffffff;font-weight:400;-webkit-text-stroke:0.25px #ffffff">Spell</span>
  <span class="tx" style="left:1129.6px;top:670.0px;font-size:11.3px;letter-spacing:-1.006px;word-spacing:0px;color:#ffffff;font-weight:400;-webkit-text-stroke:0.25px #ffffff">Win32</span>
  <span class="tx" style="left:1185.4px;top:670.0px;font-size:11.3px;letter-spacing:-0.628px;word-spacing:0px;color:#ffffff;font-weight:400;-webkit-text-stroke:0.25px #ffffff">Prettier</span>
  <span class="tx" style="left:73.7px;top:695.4px;font-size:13px;letter-spacing:-0.511px;word-spacing:1.0px;color:#d8d8d8;font-weight:400">Type here to search</span>
  <span class="tx" style="left:897.1px;top:695.6px;font-size:12.6px;letter-spacing:-0.935px;word-spacing:0px;color:#f0f0f0;font-weight:400">30°C</span>
  <span class="tx" style="left:929.4px;top:695.6px;font-size:12.6px;letter-spacing:-0.889px;word-spacing:0px;color:#f0f0f0;font-weight:400">Haze</span>
  <span class="tx" style="left:1149.9px;top:697.0px;font-size:10px;letter-spacing:-0.991px;word-spacing:0px;color:#f0f0f0;font-weight:400">ENG</span>
  <span class="tx" style="left:1193.3px;top:688.9px;font-size:10px;letter-spacing:-0.556px;word-spacing:0px;color:#f0f0f0;font-weight:400">22:00</span>
  <span class="tx" style="left:1179.6px;top:704.0px;font-size:10px;letter-spacing:-0.086px;word-spacing:0px;color:#f0f0f0;font-weight:400">29-10-2022</span>
</div>
</body>
</html>
